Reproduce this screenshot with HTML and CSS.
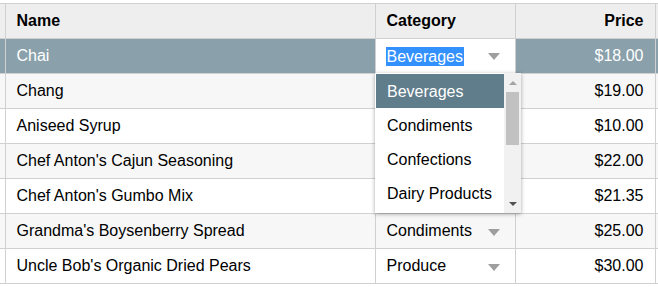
FILE: index.html
```html
<!DOCTYPE html>
<html lang="en">
<head>
  <meta charset="UTF-8">
  <title>Products</title>
  <link rel="stylesheet" href="styles.css">
</head>
<body>
  <div class="grid">
    <table>
      <thead>
        <tr>
          <th class="edge"></th>
          <th class="name">Name</th>
          <th class="cat">Category</th>
          <th class="price">Price</th>
          <th class="rest"></th>
        </tr>
      </thead>
      <tbody>
        <tr class="selected">
          <td class="edge"></td>
          <td>Chai</td>
          <td class="cat editing">
            <div class="editor"><span class="pick">Beverages</span><i class="arrow"></i></div>
          </td>
          <td class="price">$18.00</td>
          <td class="rest"></td>
        </tr>
        <!-- category cells under the open list stay empty -->
        <tr class="alt">
          <td class="edge"></td>
          <td>Chang</td>
          <td class="cat"></td>
          <td class="price">$19.00</td>
          <td class="rest"></td>
        </tr>
        <tr>
          <td class="edge"></td>
          <td>Aniseed Syrup</td>
          <td class="cat"></td>
          <td class="price">$10.00</td>
          <td class="rest"></td>
        </tr>
        <tr class="alt">
          <td class="edge"></td>
          <td>Chef Anton's Cajun Seasoning</td>
          <td class="cat"></td>
          <td class="price">$22.00</td>
          <td class="rest"></td>
        </tr>
        <tr>
          <td class="edge"></td>
          <td>Chef Anton's Gumbo Mix</td>
          <td class="cat"></td>
          <td class="price">$21.35</td>
          <td class="rest"></td>
        </tr>
        <tr class="alt">
          <td class="edge"></td>
          <td>Grandma's Boysenberry Spread</td>
          <td class="cat">Condiments<i class="arrow"></i></td>
          <td class="price">$25.00</td>
          <td class="rest"></td>
        </tr>
        <tr>
          <td class="edge"></td>
          <td>Uncle Bob's Organic Dried Pears</td>
          <td class="cat">Produce<i class="arrow"></i></td>
          <td class="price">$30.00</td>
          <td class="rest"></td>
        </tr>
      </tbody>
    </table>

    <div class="dropdown">
      <ul class="options">
        <li class="active">Beverages</li>
        <li>Condiments</li>
        <li>Confections</li>
        <li>Dairy Products</li>
      </ul>
      <div class="scrollbar">
        <span class="up"></span>
        <span class="thumb"></span>
        <span class="down"></span>
      </div>
    </div>
  </div>
</body>
</html>
```

FILE: styles.css
```css
body {
  margin: 0;
  padding: 0;
  background: #fff;
  font-family: "Liberation Sans", Arial, sans-serif;
  font-size: 16px;
  color: #000;
  overflow: hidden;
}

.grid {
  position: relative;
  padding-top: 3px;
  height: 284px;
  overflow: hidden;
}

table {
  border-collapse: collapse;
  table-layout: fixed;
  width: 676px;
}

th, td {
  height: 35px;
  padding: 0 11px;
  border: 1px solid #d0d0d0;
  text-align: left;
  white-space: nowrap;
  overflow: hidden;
  box-sizing: border-box;
}

th {
  background: #eeeeee;
  font-weight: bold;
}

th.edge, td.edge {
  width: 5px;
  padding: 0;
  border-left: none;
}

.name { width: 370px; }
.cat { width: 140px; position: relative; }
.price { width: 140px; text-align: right; }
.rest { width: 21px; padding: 0; }

tbody tr { background: #fff; }
tbody tr.alt { background: #f7f7f7; }

tbody tr.selected {
  background: #8aa1ab;
  color: #fff;
}

.arrow {
  position: absolute;
  right: 15px;
  top: 15px;
  width: 0;
  height: 0;
  border-left: 6px solid transparent;
  border-right: 6px solid transparent;
  border-top: 7px solid #9e9e9e;
}

td.editing {
  background: #fff;
  padding: 0;
  box-shadow: 0 1px 2px rgba(0,0,0,0.25);
}

.editor {
  position: relative;
  height: 34px;
  line-height: 35px;
  padding-left: 10px;
  color: #000;
}

.editor .arrow {
  top: 14px;
}

.pick {
  background: #3390ff;
  color: #fff;
  padding: 1px 1px;
}

.dropdown {
  position: absolute;
  left: 375px;
  top: 73px;
  width: 146px;
  height: 140px;
  background: #fff;
  box-shadow: 0 1px 4px rgba(0,0,0,0.35);
  display: flex;
}

.options {
  list-style: none;
  margin: 0;
  padding: 1px 0 0 1px;
  flex: 1;
}

.options li {
  height: 34px;
  line-height: 36px;
  padding-left: 11px;
  color: #000;
}

.options li.active {
  background: #607d8b;
  color: #fff;
}

.scrollbar {
  width: 17px;
  background: #f1f1f1;
  position: relative;
}

.scrollbar .thumb {
  position: absolute;
  left: 2px;
  right: 2px;
  top: 19px;
  height: 53px;
  background: #c1c1c1;
}

.scrollbar .up,
.scrollbar .down {
  position: absolute;
  left: 5px;
  width: 0;
  height: 0;
  border-left: 4px solid transparent;
  border-right: 4px solid transparent;
}

.scrollbar .up {
  top: 8px;
  border-bottom: 4px solid #a3a3a3;
}

.scrollbar .down {
  bottom: 7px;
  border-top: 4px solid #505050;
}
```
